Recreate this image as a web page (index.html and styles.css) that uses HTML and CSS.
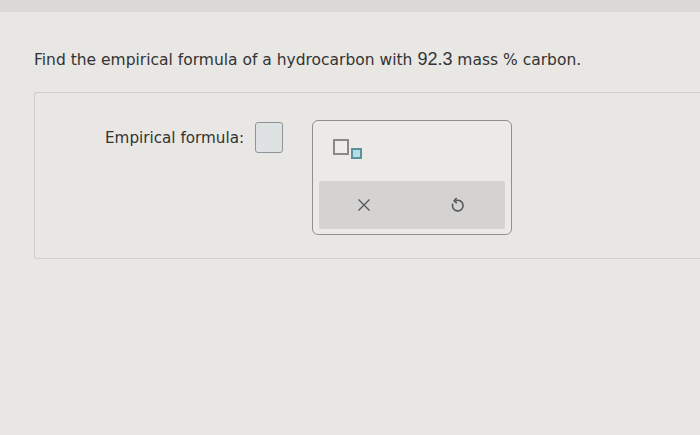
FILE: index.html
```html
<!DOCTYPE html>
<html>
<head>
<meta charset="utf-8">
<link rel="stylesheet" href="styles.css">
</head>
<body>
<div class="topband"></div>
<main class="page">
  <p class="question">Find the empirical formula of a hydrocarbon with <span class="num">92.3</span> mass % carbon.</p>
  <section class="answer-box">
    <div class="row">
      <span class="label">Empirical formula:</span>
      <span class="input"></span>
      <div class="popup">
        <div class="tools">
          <span class="sub-icon"><span class="big"></span><span class="small"></span></span>
        </div>
        <div class="bar">
          <svg class="ic" width="14" height="14" viewBox="0 0 14 14"><path d="M1.5 1.5 L12.5 12.5 M12.5 1.5 L1.5 12.5" stroke="#55585b" stroke-width="1.3" fill="none"/></svg>
          <svg class="ic" width="15" height="16" viewBox="0 0 14 15"><path d="M5 3.6 A5 5 0 1 1 2.6 6.2" stroke="#55585b" stroke-width="1.5" fill="none"/><path d="M6.2 1 L3.8 3.6 L6.4 5.8" stroke="#55585b" stroke-width="1.5" fill="none" stroke-linejoin="round"/></svg>
        </div>
      </div>
    </div>
  </section>
</main>
</body>
</html>
```
FILE: styles.css
```css
html, body {
  margin: 0;
  padding: 0;
  background: #e9e7e3;
  font-family: "DejaVu Sans", Verdana, sans-serif;
  color: #333333;
}
.topband {
  height: 12px;
  background: #dcdad6;
}
.page {
  padding: 0 0 0 34px;
}
.question {
  margin: 0;
  padding-top: 37px;
  font-size: 15.5px;
  line-height: 20px;
}
.num {
  font-family: "Liberation Sans", Arial, sans-serif;
  font-size: 18px;
}
.answer-box {
  margin-top: 22px;
  height: 167px;
  border: 1px solid #d0ceca;
  border-right: none;
  border-radius: 3px 0 0 3px;
  box-sizing: border-box;
  padding: 27px 0 0 70px;
}
.row {
  display: flex;
  align-items: flex-start;
}
.label {
  font-size: 15.2px;
  margin-top: 9px;
  width: 150px;
}
.input {
  width: 26px;
  height: 29px;
  border: 1px solid #8c949a;
  border-radius: 3px;
  background: #dee2e3;
  margin-top: 2px;
}
.popup {
  margin-left: 29px;
  width: 200px;
  height: 115px;
  border: 1px solid #8e9093;
  border-radius: 6px;
  background: #eceae7;
  box-sizing: border-box;
  padding: 0 6px 5px 6px;
  display: flex;
  flex-direction: column;
  justify-content: space-between;
}
.tools {
  padding: 17px 0 0 14px;
}
.sub-icon {
  display: flex;
  align-items: flex-end;
  height: 21px;
}
.big {
  width: 12px;
  height: 12px;
  border: 2px solid #8d8886;
  background: #efedea;
  margin-bottom: 4px;
}
.small {
  width: 7px;
  height: 7px;
  border: 2px solid #5a919c;
  background: #b7dde4;
  margin-left: 2px;
  margin-bottom: 0;
}
.bar {
  height: 48px;
  background: #d4d3d1;
  border-radius: 3px;
  display: flex;
  align-items: center;
  padding: 0 0 0 38px;
  gap: 79px;
}
```
